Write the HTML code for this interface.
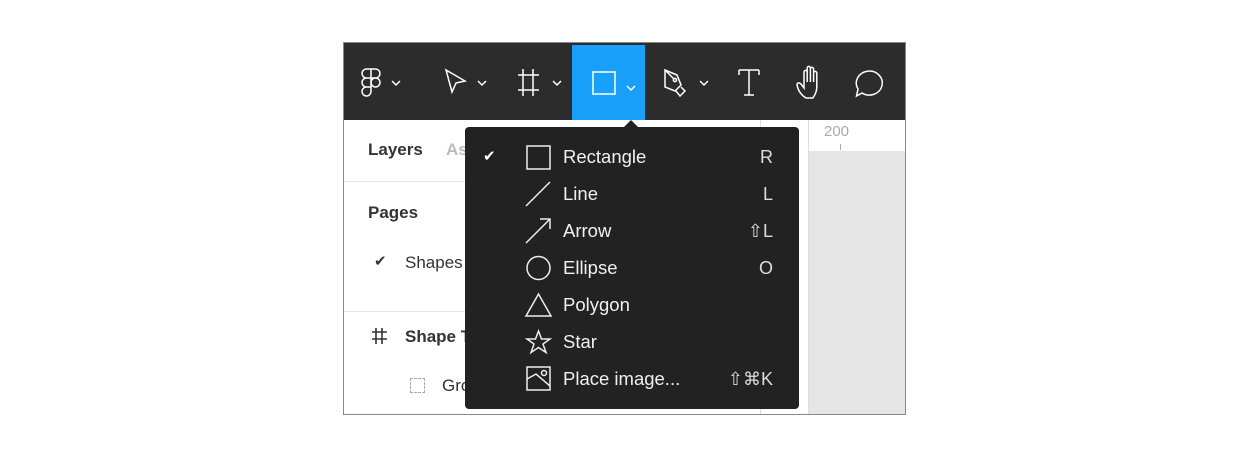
<!DOCTYPE html>
<html><head><style>
body{margin:0;width:1248px;height:457px;background:#fff;position:relative;overflow:hidden;font-family:"Liberation Sans",sans-serif}
.a{position:absolute}
.frame{left:343px;top:42px;width:561px;height:371px;border:1px solid #888;background:#fff;overflow:hidden}
.tb{left:0;top:0;width:561px;height:77px;background:#2c2c2c}
.lt{font-size:17px;color:#333}
.menu{left:465px;top:127px;width:334px;height:282px;background:#222;border-radius:4px}
.it{position:absolute;left:98px;font-size:18.5px;color:#f0f0f0;line-height:20px}
.sc{position:absolute;right:26px;font-size:18px;color:#ddd;line-height:20px}
svg{position:absolute;overflow:visible}
</style></head><body>
<div class="a frame">
 <div class="a" style="left:0;top:77px;width:416px;height:300px;background:#fff"></div>
 <div class="a" style="left:416px;top:77px;width:1px;height:300px;background:#ddd"></div>
 <div class="a" style="left:464px;top:77px;width:1px;height:300px;background:#ddd"></div>
 <div class="a" style="left:465px;top:108px;width:100px;height:270px;background:#e5e5e5"></div>
 <div class="a" style="left:480px;top:80px;font-size:15px;color:#aaa">200</div>
 <div class="a" style="left:496px;top:101px;width:1px;height:6px;background:#aaa"></div>
 <div class="a" style="left:0;top:138px;width:416px;height:1px;background:#e5e5e5"></div>
 <div class="a" style="left:0;top:268px;width:416px;height:1px;background:#e5e5e5"></div>
 <div class="a lt" style="left:24px;top:97px;font-weight:bold">Layers</div>
 <div class="a lt" style="left:102px;top:97px;color:#bbb;font-weight:bold">As</div>
 <div class="a lt" style="left:24px;top:160px;font-weight:bold">Pages</div>
 <div class="a lt" style="left:30px;top:209px;font-size:15px">✔</div>
 <div class="a lt" style="left:61px;top:210px">Shapes</div>
 <svg style="left:0;top:0" width="100" height="371" fill="none" stroke="#333" stroke-width="1.6"><path d="M32 285v16M38 285v16M28 289h15M28 296h15"/></svg>
 <div class="a lt" style="left:61px;top:284px;font-weight:bold">Shape T</div>
 <div class="a" style="left:66px;top:335px;width:13px;height:13px;border:1px dashed #aaa"></div>
 <div class="a lt" style="left:98px;top:333px">Gro</div>
 <div class="a tb">
  <div class="a" style="left:228px;top:2px;width:73px;height:75px;background:#18a0fb"></div>
  <svg style="left:0;top:0" width="561" height="77" fill="none" stroke="#fff" stroke-width="1.5">
   <g transform="translate(18,26)"><path d="M9 0H4.5a4.5 4.5 0 0 0 0 9H9zM9 0h4.5a4.5 4.5 0 0 1 0 9H9zM9 9H4.5a4.5 4.5 0 0 0 0 9H9zM9 18H4.5a4.5 4.5 0 1 0 4.5 4.5z"/><circle cx="13.5" cy="13.5" r="4.5"/></g>
   <path d="M48 38l4 4 4-4M134 38l4 4 4-4M209 38l4 4 4-4M283 43l4 4 4-4M356 38l4 4 4-4"/>
   <path d="M102 27l19 11-9 2-4 9z"/>
   <path d="M179 26v27M189 26v27M174 32h21M174 47h21"/>
   <rect x="249" y="29" width="22" height="22"/>
   <path d="M321 27l12 5 4 10-6 6-10-4zM321 27l9 9M332 48l4 5 5-5-4-4"/><circle cx="331" cy="37" r="1.6"/>
   <path d="M395 27h20M405 27v25M400 52h10M395 27v5M415 27v5"/>
   <path d="M462 55c-5-3-8-8-9-13 0-2 2-3 4-1l3 4V29a1.6 1.6 0 0 1 3.2 0v10V25a1.6 1.6 0 0 1 3.2 0v14V26a1.6 1.6 0 0 1 3.2 0v13V30a1.6 1.6 0 0 1 3.2 0v14c0 5-2 8-4 11z"/>
   <path d="M518 50a13 12 0 1 0-4-4l-1.5 7z"/>
  </svg>
 </div>
</div>
<div class="a" style="left:624px;top:120px;width:0;height:0;border-left:7px solid transparent;border-right:7px solid transparent;border-bottom:7px solid #222"></div>
<div class="a menu">
 <div class="a" style="left:18px;top:20px;color:#fff;font-size:15px">✔</div>
 <svg style="left:0;top:0" width="334" height="282" fill="none" stroke="#eee" stroke-width="1.5">
  <rect x="62" y="19" width="23" height="23"/>
  <path d="M61 79l24-24"/>
  <path d="M61 116l24-24M75 92h10v10"/>
  <circle cx="73.5" cy="141" r="11.5"/>
  <path d="M61 189l12.5-22 12.5 22z"/>
  <path d="M73.5 204l3 8h8.5l-7 5 3 8.5-7.5-5-7.5 5 3-8.5-7-5h8.5z"/>
  <rect x="62" y="240" width="23" height="23"/><path d="M62 252l9-5 14 12"/><circle cx="79" cy="246" r="2.5"/>
 </svg>
 <div class="it" style="top:20px">Rectangle</div><div class="sc" style="top:20px">R</div>
 <div class="it" style="top:57px">Line</div><div class="sc" style="top:57px">L</div>
 <div class="it" style="top:94px">Arrow</div><div class="sc" style="top:94px">⇧L</div>
 <div class="it" style="top:131px">Ellipse</div><div class="sc" style="top:131px">O</div>
 <div class="it" style="top:168px">Polygon</div>
 <div class="it" style="top:205px">Star</div>
 <div class="it" style="top:242px">Place image...</div><div class="sc" style="top:242px">⇧⌘K</div>
</div>
</body></html>
